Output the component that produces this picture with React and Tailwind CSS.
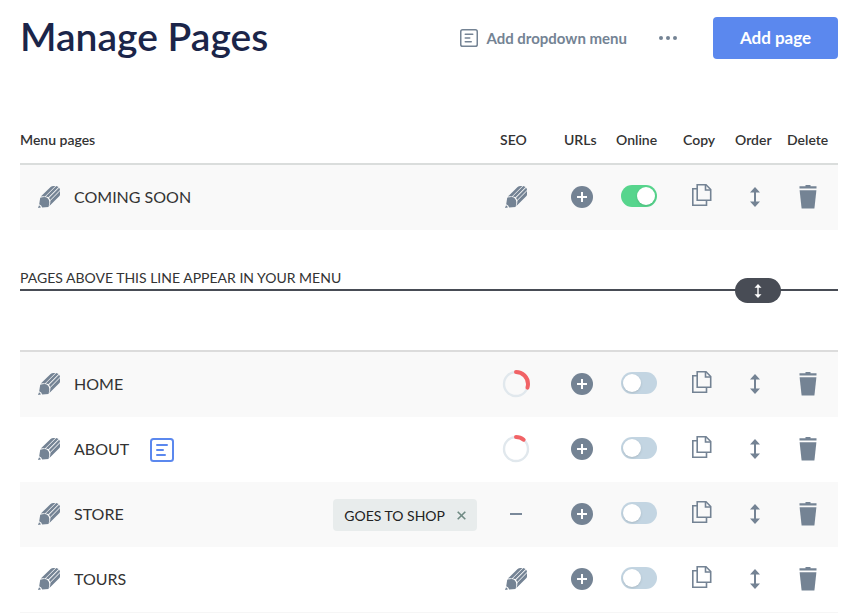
import React, { useState } from "react";

const menuPages = [{ id: 1, name: "COMING SOON", seo: "edit", online: true }];

const otherPages = [
  { id: 2, name: "HOME", seo: "score", score: 30, online: false },
  { id: 3, name: "ABOUT", seo: "score", score: 11, online: false, dropdown: true },
  { id: 4, name: "STORE", seo: "none", online: false, tag: "GOES TO SHOP" },
  { id: 5, name: "TOURS", seo: "edit", online: false },
];

const PencilIcon = () => (
  <svg width="22" height="22" viewBox="0 0 22 22" fill="currentColor">
    <path d="M2.8 10.6 12.6 1Q13.8 0 15.6 0H17.4L6.9 10.4Q4.8 10 2.8 10.6Z" />
    <path d="M7.7 10.5 18.3 0 20.6 1 10.4 11.3Q9.2 10.6 7.7 10.5Z" />
    <path d="M11 11.9 21.1 1.7Q22 2.6 22 4L12.2 14Q11.8 12.7 11 11.9Z" />
    <path d="M12.4 14.8 22 5V8.4Q22 9.4 21.2 10.2L11.4 20Q12.6 17.3 12.4 14.8Z" />
    <path d="M2.2 11.8Q7.4 10 9.9 12.4 12.4 15 10.5 21L4.2 21.4Q3.6 19.2 1.2 18.3Z" />
    <path d="M1 19.3Q2.6 20 2.9 21.6L0 22Z" />
  </svg>
);

const ListIcon = ({ size, strokeWidth }) => (
  <svg
    width={size}
    height={size}
    viewBox="0 0 24 24"
    fill="none"
    stroke="currentColor"
    strokeWidth={strokeWidth}
  >
    <rect x="1" y="1" width="22" height="22" rx="2.5" />
    <path d="M7 7h10M7 12h6M7 17h8" strokeLinecap="round" />
  </svg>
);

const PlusIcon = () => (
  <svg width="22" height="22" viewBox="0 0 22 22">
    <circle cx="11" cy="11" r="11" fill="currentColor" />
    <path d="M11 6v10M6 11h10" stroke="#fff" strokeWidth="2" />
  </svg>
);

const CopyIcon = () => (
  <svg
    width="20"
    height="22"
    viewBox="0 0 20 22"
    fill="none"
    stroke="currentColor"
    strokeWidth="1.6"
  >
    <path d="M5.2.8H14L18.7 5.5V16.2H5.2Z" />
    <path d="M13.5.8V6H18.7" />
    <path d="M5.2 4.8H.8V21.2H14.5V16.2" />
  </svg>
);

const MoveIcon = ({ width, height }) => (
  <svg width={width} height={height} viewBox="0 0 10 20" fill="currentColor">
    <path d="M5 0 10 5.4H6V14.6H10L5 20 0 14.6H4V5.4H0Z" />
  </svg>
);

const TrashIcon = () => (
  <svg width="18" height="24" viewBox="0 0 18 24" fill="currentColor">
    <path d="M6.5 0H11.5V1.2H17.5V3.6H.5V1.2H6.5Z" />
    <path d="M.6 5.2H17.4L15.4 23.5H2.6Z" />
  </svg>
);

const ScoreRing = ({ score }) => (
  <svg width="28" height="28" viewBox="0 0 28 28" fill="none">
    <circle cx="14" cy="14" r="12" stroke="#e1e8ed" strokeWidth="2.4" />
    <circle
      cx="14"
      cy="14"
      r="12"
      stroke="#f16366"
      strokeWidth="4"
      strokeLinecap="round"
      pathLength="100"
      strokeDasharray={`${score} 100`}
      transform="rotate(-90 14 14)"
    />
  </svg>
);

const Toggle = ({ label, defaultOn }) => {
  const [on, setOn] = useState(defaultOn);

  return (
    <label
      className={`flex h-[22px] w-9 cursor-pointer items-center rounded-full px-0.5 ${
        on ? "justify-end bg-[#57d58d]" : "justify-start bg-[#c3d5e2]"
      }`}
    >
      <input
        type="checkbox"
        className="sr-only"
        aria-label={label}
        checked={on}
        onChange={() => setOn(!on)}
      />
      <span className="h-[18px] w-[18px] rounded-full bg-white shadow" />
    </label>
  );
};

const SeoCell = ({ page }) => {
  if (page.seo === "score") {
    return <ScoreRing score={page.score} />;
  }
  if (page.seo === "none") {
    return <span className="h-0.5 w-3 bg-[#7a899a]" />;
  }
  return (
    <button type="button" aria-label={`Edit SEO for ${page.name}`}>
      <PencilIcon />
    </button>
  );
};

const Columns = () => (
  <colgroup>
    <col />
    <col className="w-16" />
    <col className="w-[52px]" />
    <col className="w-[67px]" />
    <col className="w-[52px]" />
    <col className="w-[52px]" />
    <col className="w-[51px]" />
  </colgroup>
);

const PageRow = ({ page }) => {
  const [tag, setTag] = useState(page.tag);

  return (
    <tr className="h-[65px] text-[#748394] odd:bg-[#f9f9f9]">
      <td className="p-0 pb-0.5">
        <div className="flex items-center pr-[23px] pl-[18px]">
          <button type="button" aria-label={`Edit ${page.name}`}>
            <PencilIcon />
          </button>
          <span className="ml-3.5 text-base text-[#333]">{page.name}</span>
          {page.dropdown && (
            <button
              type="button"
              aria-label="Dropdown menu"
              className="ml-[21px] pt-0.5 text-[#5b88ee]"
            >
              <ListIcon size={24} strokeWidth={2} />
            </button>
          )}
          {tag && (
            <span className="mt-0.5 ml-auto flex h-8 items-center gap-3 rounded bg-[#e8ecec] px-[11px] pt-0.5 text-sm text-[#222]">
              {tag}
              <button
                type="button"
                aria-label="Remove tag"
                className="text-[#6f8a83]"
                onClick={() => setTag("")}
              >
                <svg width="9" height="9" viewBox="0 0 9 9" stroke="currentColor" strokeWidth="1.6">
                  <path d="M.7.7 8.3 8.3M8.3.7.7 8.3" />
                </svg>
              </button>
            </span>
          )}
        </div>
      </td>
      <td className="p-0 pb-0.5">
        <div className="flex w-8 justify-center">
          <SeoCell page={page} />
        </div>
      </td>
      <td className="p-0 pb-0.5">
        <div className="flex w-9 justify-center">
          <button type="button" aria-label={`Add URL for ${page.name}`}>
            <PlusIcon />
          </button>
        </div>
      </td>
      <td className="p-0 pb-1">
        <div className="flex w-[46px] justify-center">
          <Toggle label={`${page.name} online`} defaultOn={page.online} />
        </div>
      </td>
      <td className="p-0 pb-1.5">
        <div className="flex w-[38px] justify-center">
          <button type="button" aria-label={`Copy ${page.name}`}>
            <CopyIcon />
          </button>
        </div>
      </td>
      <td className="p-0 pb-0.5">
        <div className="flex w-10 justify-center">
          <button type="button" aria-label={`Move ${page.name}`}>
            <MoveIcon width={10} height={20} />
          </button>
        </div>
      </td>
      <td className="p-0 pb-0.5">
        <div className="flex w-[42px] justify-center">
          <button type="button" aria-label={`Delete ${page.name}`}>
            <TrashIcon />
          </button>
        </div>
      </td>
    </tr>
  );
};

const App = () => {
  return (
    <div className="bg-white pr-1 pl-5 font-['Lato',sans-serif] text-[#333]">
      <header className="flex items-center pt-[17px]">
        <h1 className="pb-1 text-[39px] leading-[38px] font-semibold text-[#1b2549]">
          Manage Pages
        </h1>
        <div className="ml-auto flex items-center">
          <button
            type="button"
            className="flex items-center gap-2 text-[15px] font-bold text-[#748394]"
          >
            <ListIcon size={18} strokeWidth={2} />
            Add dropdown menu
          </button>
          <button type="button" aria-label="More options" className="mr-9 ml-8 text-[#748394]">
            <svg width="18" height="4" viewBox="0 0 18 4" fill="currentColor">
              <circle cx="2" cy="2" r="2" />
              <circle cx="9" cy="2" r="2" />
              <circle cx="16" cy="2" r="2" />
            </svg>
          </button>
          <button
            type="button"
            className="h-[42px] w-[125px] rounded bg-[#5b88ee] text-[17px] font-bold text-white"
          >
            Add page
          </button>
        </div>
      </header>

      <main>
        <table className="mt-[69px] w-full table-fixed border-separate border-spacing-0">
          <Columns />
          <thead>
            <tr className="h-[37px] text-left align-top text-sm leading-6">
              <th className="border-b-2 border-[#dadddc] p-0 font-semibold">Menu pages</th>
              <th className="border-b-2 border-[#dadddc] p-0 font-semibold">SEO</th>
              <th className="border-b-2 border-[#dadddc] p-0 font-semibold">URLs</th>
              <th className="border-b-2 border-[#dadddc] p-0 font-semibold">Online</th>
              <th className="border-b-2 border-[#dadddc] p-0 font-semibold">Copy</th>
              <th className="border-b-2 border-[#dadddc] p-0 font-semibold">Order</th>
              <th className="border-b-2 border-[#dadddc] p-0 font-semibold">Delete</th>
            </tr>
          </thead>
          <tbody>
            {menuPages.map((page) => (
              <PageRow key={page.id} page={page} />
            ))}
          </tbody>
        </table>

        <div className="relative mt-[37px] border-b-2 border-[#484c55]">
          <p className="pb-px text-sm leading-[21px]">PAGES ABOVE THIS LINE APPEAR IN YOUR MENU</p>
          <button
            type="button"
            aria-label="Move menu line"
            className="absolute right-[57px] -bottom-3.5 flex h-[25px] w-[46px] items-center justify-center rounded-full bg-[#484c55] text-white"
          >
            <MoveIcon width={8} height={14} />
          </button>
        </div>

        <table className="mt-[59px] w-full table-fixed border-separate border-spacing-0 border-t-2 border-b border-t-[#dcdcdc] border-b-[#f6f6f6]">
          <Columns />
          <tbody>
            {otherPages.map((page) => (
              <PageRow key={page.id} page={page} />
            ))}
          </tbody>
        </table>
      </main>
    </div>
  );
};

export default App;
